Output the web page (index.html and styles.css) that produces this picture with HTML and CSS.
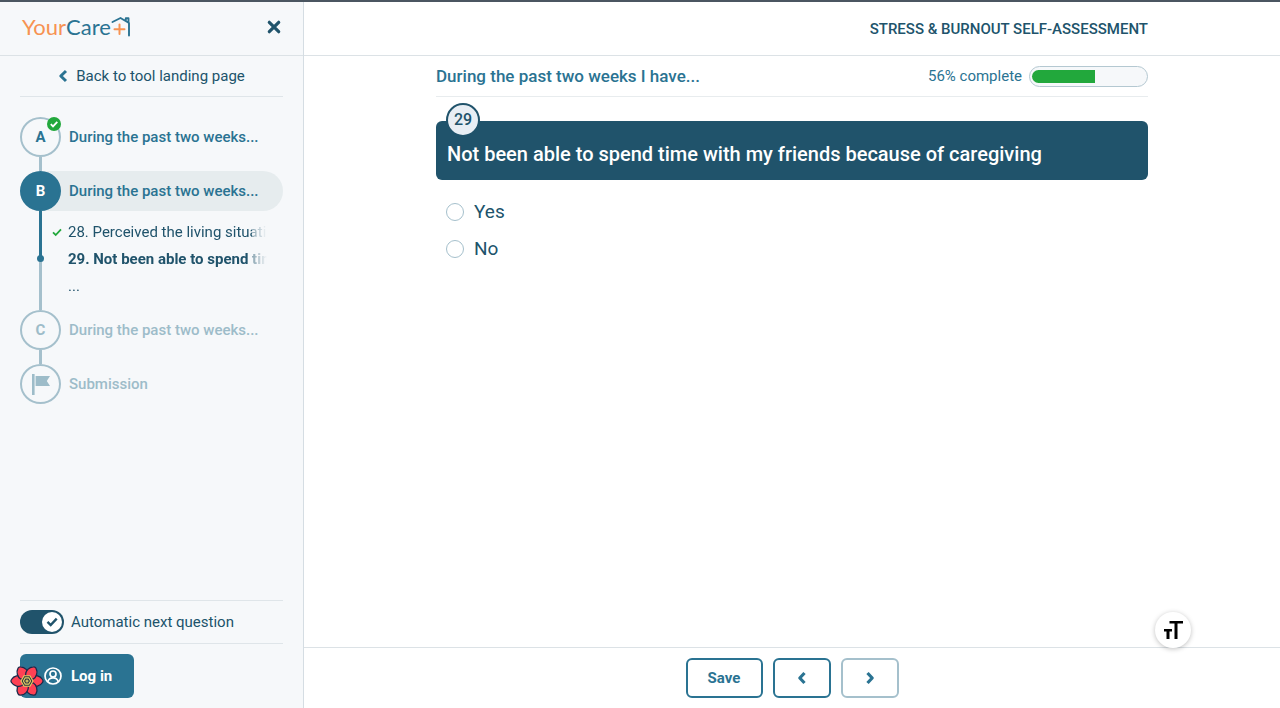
FILE: index.html
```html
<!DOCTYPE html>
<html lang="en">
<head>
    <meta charset="utf-8">
    <meta name="viewport" content="width=device-width, initial-scale=1">
    <title>Stress &amp; Burnout Self-Assessment</title>
    <link rel="stylesheet" href="styles.css">
</head>
<body>
    <aside class="sidebar">
        <div class="sidebar-header">
            <a href="#" class="logo" aria-label="YourCare+"><span class="logo-your">Your</span><span class="logo-care">Care</span><svg class="logo-house" viewBox="0 0 20 22" fill="none" stroke-linecap="round" stroke-linejoin="round">
                <path d="M1.500 6 9.500 2l8.500 5v12.500M14.800 4.500V2.300h2.700V6.500" stroke="#2a7392" stroke-width="1.900"/>
                <path d="M8.500 8.500v9.500M3.500 13.200h10" stroke="#f79352" stroke-width="2"/>
            </svg></a>
            <button type="button" class="close" aria-label="Close menu">
                <svg viewBox="0 0 14 14"><path d="M2.300 2.300l9.400 9.400M11.700 2.300l-9.400 9.400" stroke="currentColor" stroke-width="3.200" stroke-linecap="round"/></svg>
            </button>
        </div>

        <nav class="sidebar-nav">
            <a href="#" class="back">
                <svg viewBox="0 0 10 14" fill="none"><path d="M8 2 2.800 7 8 12" stroke="currentColor" stroke-width="3" stroke-linejoin="round"/></svg>
                Back to tool landing page
            </a>

            <ol class="steps">
                <li class="step">
                    <a href="#" class="step-link">
                        <span class="marker">A
                            <svg class="done" viewBox="0 0 14 14" fill="none"><circle cx="7" cy="7" r="7" fill="#22a83c"/><path d="M3.800 7.200 6 9.400l4.300-4.500" stroke="#fff" stroke-width="1.800"/></svg>
                        </span>
                        During the past two weeks...
                    </a>
                </li>
                <li class="step active">
                    <a href="#" class="step-link">
                        <span class="marker">B</span>
                        During the past two weeks...
                    </a>
                    <ul class="questions">
                        <li>
                            <svg class="tick" viewBox="0 0 10 10" fill="none"><path d="M1 5.400 3.700 8 9 2.300" stroke="currentColor" stroke-width="1.800"/></svg>
                            <a href="#" class="question-link">28. Perceived the living situation</a>
                        </li>
                        <li class="current">
                            <a href="#" class="question-link">29. Not been able to spend time</a>
                        </li>
                        <li>
                            <span class="question-link">...</span>
                        </li>
                    </ul>
                </li>
                <li class="step disabled">
                    <a href="#" class="step-link">
                        <span class="marker">C</span>
                        During the past two weeks...
                    </a>
                </li>
                <li class="step disabled">
                    <a href="#" class="step-link">
                        <span class="marker">
                            <svg class="flag" viewBox="0 0 18 21"><path d="M0 0h2.600v21H0zM3.600 2H18l-3.200 5L18 12H3.600z" fill="currentColor"/></svg>
                        </span>
                        Submission
                    </a>
                </li>
            </ol>
        </nav>

        <div class="sidebar-footer">
            <label class="auto-next" for="auto-next">
                <span class="switch">
                    <input type="checkbox" id="auto-next" checked>
                    <svg viewBox="0 0 20 20" fill="none"><circle cx="10" cy="10" r="10" fill="#fff"/><path d="M5.500 9.800 8.700 13l6-6.300" stroke="#20536b" stroke-width="2.400"/></svg>
                </span>
                Automatic next question
            </label>
            <button type="button" class="login">
                <svg viewBox="0 0 18 18" fill="none" stroke="currentColor" stroke-width="1.700">
                    <circle cx="9" cy="9" r="8"/>
                    <circle cx="9" cy="7" r="3"/>
                    <path d="M3.800 14.800c.6-2.800 2.500-4 5.200-4s4.600 1.200 5.200 4"/>
                </svg>
                Log in
            </button>
        </div>
    </aside>

    <div class="page">
        <header class="page-header">
            <h1 class="container">STRESS &amp; BURNOUT SELF-ASSESSMENT</h1>
        </header>

        <main class="container content">
            <div class="section-bar">
                <h2>During the past two weeks I have...</h2>
                <div class="progress">
                    <span>56% complete</span>
                    <div class="progress-track" role="progressbar" aria-valuenow="56" aria-valuemin="0" aria-valuemax="100" aria-label="Progress">
                        <div class="progress-fill" style="width: 56%"></div>
                    </div>
                </div>
            </div>

            <form id="question-form">
                <fieldset>
                    <legend class="question">
                        <span class="question-number">29</span>
                        Not been able to spend time with my friends because of caregiving
                    </legend>
                    <label class="option" for="answer-yes">
                        <input type="radio" name="answer" id="answer-yes" value="yes">
                        Yes
                    </label>
                    <label class="option" for="answer-no">
                        <input type="radio" name="answer" id="answer-no" value="no">
                        No
                    </label>
                </fieldset>
            </form>
        </main>

        <footer class="page-footer">
            <button type="submit" form="question-form" class="btn btn-save">Save</button>
            <button type="button" class="btn" aria-label="Previous question">
                <svg viewBox="0 0 10 14" fill="none"><path d="M7.500 2 2.800 7l4.700 5" stroke="currentColor" stroke-width="3.200" stroke-linejoin="round"/></svg>
            </button>
            <button type="button" class="btn btn-muted" aria-label="Next question">
                <svg viewBox="0 0 10 14" fill="none"><path d="M2.500 2 7.200 7l-4.700 5" stroke="currentColor" stroke-width="3.200" stroke-linejoin="round"/></svg>
            </button>
        </footer>
    </div>

    <button type="button" class="text-size" aria-label="Text size">
        <svg viewBox="0 0 20 20"><path d="M6.500 1H20v2.500h-5.500V19h-3V3.500h-5zM1 9h8v2.500H6.500V19h-3v-7.500H1z" fill="#000"/></svg>
    </button>

    <button type="button" class="devtools" aria-label="Open devtools">
        <svg viewBox="-17 -17 34 34">
            <defs>
                <path id="petal" d="M1 0 5-4.500C8-6 13-5.500 15.500-1.500Q16.500 0 15.500 1.500C13 5.500 8 6 5 4.500z"/>
            </defs>
            <g fill="#ff4154" stroke="#1b2a4a" stroke-width="1.300" stroke-linejoin="round">
                <use href="#petal"/>
                <use href="#petal" transform="rotate(60)"/>
                <use href="#petal" transform="rotate(120)"/>
                <use href="#petal" transform="rotate(180)"/>
                <use href="#petal" transform="rotate(240)"/>
                <use href="#petal" transform="rotate(300)"/>
            </g>
            <g fill="#2b3440" stroke="#e3cf63" stroke-width="1.100">
                <path d="M-3-5.200h6L6 0 3 5.200h-6L-6 0z"/>
                <path d="M-1.800-3.100h3.600L3.600 0 1.800 3.100h-3.600L-3.600 0z"/>
                <circle r="1"/>
            </g>
        </svg>
    </button>
</body>
</html>
```
FILE: styles.css
```css
* {
    box-sizing: border-box;
}

body {
    display: flex;
    min-height: 100vh;
    margin: 0;
    border-top: 2px solid #4b5661;
    font-family: Roboto, sans-serif;
    font-size: 15px;
    line-height: 20px;
    color: #20536b;
    background-color: #fff;
}

a {
    color: inherit;
    text-decoration: none;
}

button {
    font: inherit;
    cursor: pointer;
}

svg {
    display: block;
    flex: none;
}

ol,
ul {
    margin: 0;
    padding: 0;
    list-style: none;
}

/* Sidebar */

.sidebar {
    display: flex;
    flex-direction: column;
    flex: none;
    width: 304px;
    border-right: 1px solid #d5dde3;
    background-color: #f6f8fa;
}

.sidebar-header,
.page-header {
    display: flex;
    align-items: center;
    height: 54px;
    border-bottom: 1px solid #dce2e6;
}

.sidebar-header {
    justify-content: space-between;
    padding: 0 20px 3px;
}

.logo {
    display: flex;
    align-items: center;
    padding-left: 2px;
    font-family: Lato, sans-serif;
    font-size: 22px;
}

.logo-your {
    color: #f79352;
}

.logo-care {
    color: #2a7392;
}

.logo-house {
    width: 20px;
    height: 22px;
}

.close {
    padding: 2px;
    border: none;
    background: none;
    color: #20536b;
}

.close svg {
    width: 14px;
    height: 14px;
}

.sidebar-nav {
    flex: 1;
    padding: 0 20px;
}

.back {
    display: flex;
    align-items: center;
    justify-content: center;
    gap: 8px;
    height: 41px;
    border-bottom: 1px solid #dfe5e9;
}

.back svg {
    width: 10px;
    height: 14px;
    color: #2a7392;
}

.steps {
    padding-top: 20px;
    font-weight: 500;
    color: #2a7392;
}

.step + .step::before {
    content: "";
    display: block;
    width: 3px;
    height: 14px;
    margin-left: 19px;
    background-color: #a5c0cc;
}

.step.active + .step::before {
    display: none;
}

.step-link {
    display: flex;
    align-items: center;
    gap: 8px;
    border-radius: 20px;
}

.active .step-link {
    background-color: #e6ecee;
}

.marker {
    position: relative;
    display: flex;
    align-items: center;
    justify-content: center;
    width: 41px;
    height: 40px;
    border: 2px solid #a5c0cc;
    border-radius: 50%;
    font-weight: 700;
}

.active .marker {
    border-color: #2a7392;
    color: #fff;
    background-color: #2a7392;
}

.done {
    position: absolute;
    top: -2px;
    right: -2px;
    width: 14px;
    height: 14px;
}

.disabled {
    color: #9dbcc9;
}

.flag {
    width: 18px;
    height: 21px;
}

.questions {
    padding: 7px 16px 11px 32px;
    background: linear-gradient(#2a7392 47px, #a5c0cc 47px) 19px 0 / 3px 100% no-repeat;
    font-weight: 400;
    color: #20536b;
}

.questions li {
    position: relative;
    display: flex;
    align-items: center;
    height: 27px;
    padding-left: 16px;
}

.questions .current {
    font-weight: 700;
}

.current::before {
    content: "";
    position: absolute;
    left: -15px;
    width: 7px;
    height: 7px;
    border-radius: 50%;
    background-color: #2a7392;
}

.tick {
    position: absolute;
    left: 0;
    width: 10px;
    height: 10px;
    color: #22a83c;
}

.question-link {
    flex: 1;
    overflow: hidden;
    white-space: nowrap;
    -webkit-mask-image: linear-gradient(to left, transparent, rgba(0, 0, 0, 0.5) 15px, #000 15px);
    mask-image: linear-gradient(to left, transparent, rgba(0, 0, 0, 0.5) 15px, #000 15px);
}

.sidebar-footer {
    padding: 0 20px 10px;
}

.auto-next {
    display: flex;
    align-items: center;
    gap: 7px;
    height: 44px;
    margin-bottom: 10px;
    border-top: 1px solid #dfe5e9;
    border-bottom: 1px solid #dfe5e9;
}

.switch {
    position: relative;
}

.switch input {
    display: block;
    appearance: none;
    width: 44px;
    height: 24px;
    margin: 0;
    border-radius: 12px;
    background-color: #20536b;
}

.switch svg {
    position: absolute;
    top: 2px;
    left: 2px;
    width: 20px;
    height: 20px;
    pointer-events: none;
}

.switch input:checked + svg {
    left: 22px;
}

.login {
    display: flex;
    align-items: center;
    gap: 9px;
    height: 44px;
    padding: 0 22px 0 24px;
    border: none;
    border-radius: 6px;
    font-weight: 700;
    color: #fff;
    background-color: #2a7392;
}

.login svg {
    width: 18px;
    height: 18px;
}

/* Page */

.page {
    display: flex;
    flex-direction: column;
    flex: 1;
    min-width: 0;
}

.container {
    width: 100%;
    max-width: 712px;
    margin: 0 auto;
}

h1 {
    font-size: 15px;
    font-weight: 500;
    text-align: right;
}

.content {
    flex: 1;
}

.section-bar {
    display: flex;
    align-items: center;
    justify-content: space-between;
    height: 41px;
    margin-bottom: 24px;
    border-bottom: 1px solid #e8ecee;
    color: #2a7392;
}

h2 {
    margin: 0;
    font-size: 17px;
    font-weight: 500;
}

.progress {
    display: flex;
    align-items: center;
    gap: 7px;
}

.progress-track {
    width: 119px;
    height: 21px;
    padding: 3px 2px;
    border: 1px solid #b4c8d1;
    border-radius: 11px;
    background-color: #f6f8fa;
    overflow: hidden;
}

.progress-fill {
    height: 100%;
    border-radius: 7px 0 0 7px;
    background-color: #22a83c;
}

fieldset {
    min-width: 0;
    margin: 0;
    padding: 0;
    border: none;
}

.question {
    position: relative;
    width: 100%;
    margin-bottom: 13px;
    padding: 20px 11px 13px;
    border-radius: 6px;
    font-size: 20px;
    font-weight: 500;
    line-height: 26px;
    color: #fff;
    background-color: #20536b;
}

.question-number {
    position: absolute;
    top: -18px;
    left: 10px;
    width: 34px;
    height: 34px;
    border: 2px solid #20536b;
    border-radius: 50%;
    font-size: 16px;
    line-height: 30px;
    text-align: center;
    color: #20536b;
    background-color: #e8eef4;
}

.option {
    display: flex;
    align-items: center;
    gap: 10px;
    height: 37px;
    padding-left: 10px;
    font-size: 19px;
}

.option input {
    appearance: none;
    width: 18px;
    height: 18px;
    margin: 0;
    border: 1px solid #a5c0cc;
    border-radius: 50%;
    background-color: #fff;
}

.option input:checked {
    border: 5px solid #2a7392;
}

.page-footer {
    display: flex;
    justify-content: center;
    gap: 10px;
    padding: 10px;
    border-top: 1px solid #dce2e6;
}

.btn {
    display: flex;
    align-items: center;
    justify-content: center;
    width: 58px;
    height: 40px;
    padding: 0;
    border: 2px solid #2a7392;
    border-radius: 6px;
    font-weight: 700;
    color: #2a7392;
    background-color: #fff;
}

.btn svg {
    width: 10px;
    height: 14px;
}

.btn-save {
    width: 77px;
}

.btn-muted {
    border-color: #a5c0cc;
}

/* Floating buttons */

.text-size {
    position: fixed;
    right: 89px;
    bottom: 60px;
    display: flex;
    align-items: center;
    justify-content: center;
    width: 36px;
    height: 36px;
    padding: 0;
    border: none;
    border-radius: 50%;
    background-color: #fff;
    box-shadow: 0 1px 5px rgba(0, 0, 0, 0.25);
}

.text-size svg {
    width: 20px;
    height: 20px;
}

.devtools {
    position: fixed;
    left: 10px;
    bottom: 10px;
    padding: 0;
    border: none;
    background: none;
}

.devtools svg {
    width: 34px;
    height: 34px;
}
```
